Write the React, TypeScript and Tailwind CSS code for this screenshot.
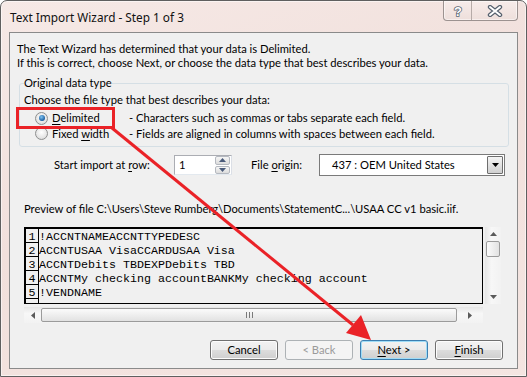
import React from "react";

const ui = "font-['Lato',sans-serif] text-[11.2px] leading-[14px] text-black";
const mono = "font-['Liberation_Mono',monospace] text-[11.67px] leading-[16px] text-black";

const previewRows = [
	"!ACCNTNAMEACCNTTYPEDESC",
	"ACCNTUSAA VisaCCARDUSAA Visa",
	"ACCNTDebits TBDEXPDebits TBD",
	"ACCNTMy checking accountBANKMy checking account",
	"!VENDNAME",
];

const U: React.FC<{ children: React.ReactNode }> = ({ children }) => (
	<span className="underline underline-offset-[2px] decoration-1">{children}</span>
);

const Tri: React.FC<{ dir: "up" | "down" | "left" | "right"; color?: string }> = ({ dir, color = "#4d4d4d" }) => {
	const points = {
		up: "0,4 3.5,0 7,4",
		down: "0,0 7,0 3.5,4",
		left: "4,0 4,7 0,3.5",
		right: "0,0 4,3.5 0,7",
	}[dir];
	const vertical = dir === "up" || dir === "down";
	return (
		<svg width={vertical ? 7 : 4} height={vertical ? 4 : 7} viewBox={vertical ? "0 0 7 4" : "0 0 4 7"}>
			<polygon points={points} fill={color} />
		</svg>
	);
};

const Radio: React.FC<{ checked?: boolean }> = ({ checked }) => (
	<span className="flex h-[13px] w-[13px] shrink-0 items-center justify-center rounded-full border border-[#8e8f8f] bg-[radial-gradient(circle_at_50%_40%,#ffffff_0%,#e6e6e6_60%,#cfcfcf_100%)]">
		{checked && (
			<span className="h-[6px] w-[6px] rounded-full bg-[radial-gradient(circle_at_40%_35%,#7ec3f2_0%,#1b5ea0_70%,#0e3f75_100%)]" />
		)}
	</span>
);

const WizardButton: React.FC<{ children: React.ReactNode; variant?: "normal" | "default" | "disabled" }> = ({
	children,
	variant = "normal",
}) => {
	if (variant === "disabled") {
		return (
			<div className="flex h-[20px] w-[68px] items-center justify-center rounded-[3px] border border-[#adb2b5] bg-[#f4f4f4] text-[#9a9a9a]">
				{children}
			</div>
		);
	}
	if (variant === "default") {
		return (
			<div className="flex h-[20px] w-[68px] items-center justify-center rounded-[3px] border border-[#3c7fb1] bg-[linear-gradient(#f2f2f2_0%,#ebebeb_49%,#dddddd_50%,#cfcfcf_100%)] shadow-[inset_0_0_0_1px_#9fdcf7]">
				{children}
			</div>
		);
	}
	return (
		<div className="flex h-[20px] w-[68px] items-center justify-center rounded-[3px] border border-[#707070] bg-[linear-gradient(#f2f2f2_0%,#ebebeb_49%,#dddddd_50%,#cfcfcf_100%)] shadow-[inset_0_0_0_1px_#fcfcfc]">
			{children}
		</div>
	);
};

export default function App() {
	return (
		<div
			className={`relative flex h-[377px] w-[527px] flex-col overflow-hidden rounded-t-[7px] border border-[#5f5f5f] bg-[linear-gradient(160deg,#f6e9e6_0%,#f1e0dc_45%,#f4e5e1_100%)] shadow-[inset_0_0_0_1px_rgba(255,255,255,0.55)] ${ui}`}
		>
			{/* title bar */}
			<div className="flex h-[31px] shrink-0 items-center justify-between">
				<div className="pl-[9px] font-['Noto_Sans',sans-serif] text-[11.8px] text-[#111]">Text Import Wizard - Step 1 of 3</div>
				<div className="mr-[8px] flex h-[20px] self-start rounded-b-[4px] border-x border-b border-[#9c9290] bg-[linear-gradient(#f7ecea,#eedfdb)] shadow-[inset_0_0_0_1px_rgba(255,255,255,0.5)]">
					<div className="flex w-[28px] items-center justify-center border-r border-[#b6aba8]">
						<svg width="12" height="14" viewBox="0 0 12 14">
							<text
								x="6"
								y="12"
								textAnchor="middle"
								fontSize="13"
								fontWeight="bold"
								fontFamily="Liberation Sans, sans-serif"
								fill="#ffffff"
								stroke="#5b6673"
								strokeWidth="1.6"
								paintOrder="stroke"
							>
								?
							</text>
						</svg>
					</div>
					<div className="flex w-[45px] items-center justify-center">
						<svg width="16" height="12" viewBox="0 0 16 12">
							<path d="M3 2 L13 10 M13 2 L3 10" stroke="#56616e" strokeWidth="4.4" strokeLinecap="round" />
							<path d="M3 2 L13 10 M13 2 L3 10" stroke="#ffffff" strokeWidth="2" strokeLinecap="round" />
						</svg>
					</div>
				</div>
			</div>

			{/* client area */}
			<div className="mx-[8px] flex h-[337px] shrink-0 flex-col border border-[#8a8a8a] bg-[#f0f0f0]">
				<div className="pl-[7px] pt-[9px]">
					<div>The Text Wizard has determined that your data is Delimited.</div>
					<div>If this is correct, choose Next, or choose the data type that best describes your data.</div>
				</div>

				<fieldset className="ml-[9px] mr-[8px] mt-[6px] rounded-[3px] border border-[#d5dfe5] px-[4px] pb-[5px]">
					<legend className="leading-[14px]">Original data type</legend>
					<div className="mt-[3px]">Choose the file type that best describes your data:</div>
					<div className="mt-[3px] flex h-[16px] items-center">
						<div className="flex w-[105px] items-center pl-[11px]">
							<Radio checked />
							<span className="ml-[4px]">
								<U>D</U>elimited
							</span>
						</div>
						<span>- Characters such as commas or tabs separate each field.</span>
					</div>
					<div className="flex h-[15px] items-center">
						<div className="flex w-[105px] items-center pl-[11px]">
							<Radio />
							<span className="ml-[4px]">
								Fixed <U>w</U>idth
							</span>
						</div>
						<span>- Fields are aligned in columns with spaces between each field.</span>
					</div>
				</fieldset>

				<div className="mt-[7px] flex h-[22px] items-center">
					<div className="ml-[44px] w-[120px]">
						Start import at <U>r</U>ow:
					</div>
					<div className="flex h-[20px] w-[58px] items-center border border-[#abadb3] border-b-[#e3e9ef] border-r-[#dbdfe6] bg-white pl-[4px]">
						<span className="flex-1">1</span>
						<div className="mr-[1px] flex h-[18px] w-[15px] flex-col gap-[1px]">
							<div className="flex flex-1 items-center justify-center rounded-[2px] border border-[#b5b9c0] bg-[linear-gradient(#f6f6f6,#dcdcdc)]">
								<Tri dir="up" color="#4a5b7a" />
							</div>
							<div className="flex flex-1 items-center justify-center rounded-[2px] border border-[#b5b9c0] bg-[linear-gradient(#f6f6f6,#dcdcdc)]">
								<Tri dir="down" color="#4a5b7a" />
							</div>
						</div>
					</div>
					<div className="ml-[19px] w-[68px]">
						File <U>o</U>rigin:
					</div>
					<div className="flex h-[22px] w-[186px] items-center border border-[#7a7a7a] bg-white">
						<span className="flex-1 pl-[12px]">437 : OEM United States</span>
						<div className="mr-[1px] flex h-[18px] w-[16px] items-center justify-center rounded-[1px] border border-[#6e6e6e] bg-[linear-gradient(#f4f4f4,#d0d0d0)]">
							<Tri dir="down" color="#000000" />
						</div>
					</div>
				</div>

				<div className="ml-[14px] mt-[26px]">
					Preview of file C:\Users\Steve Rumberg\Documents\StatementC...\USAA CC v1 basic.iif.
				</div>

				<div className="ml-[14px] mt-[11px] flex h-[77px] gap-[2px]">
					<div className="flex w-[459px] flex-col overflow-hidden border-b border-l-2 border-r border-t-2 border-black bg-[#f0f0f0]">
						{previewRows.map((row, index) => (
							<div key={index} className="flex h-[14px] shrink-0">
								<div className={`w-[13px] shrink-0 overflow-hidden border-b border-r border-black text-center ${mono}`}>
									{index + 1}
								</div>
								<div className={`overflow-hidden whitespace-pre ${mono}`}>{row}</div>
							</div>
						))}
						<div className="flex flex-1">
							<div className="w-[13px] border-r border-black" />
						</div>
					</div>
					<div className="flex w-[16px] flex-col bg-[linear-gradient(90deg,#e6e6e6,#f7f7f7_40%,#f2f2f2)]">
						<div className="flex h-[14px] items-center justify-center">
							<Tri dir="up" color="#5a5a5a" />
						</div>
						<div className="mx-[1px] h-[16px] rounded-[2px] border border-[#9b9b9b] bg-[linear-gradient(90deg,#fbfbfb,#e2e2e2)]" />
						<div className="flex-1" />
						<div className="flex h-[14px] items-center justify-center">
							<Tri dir="down" color="#5a5a5a" />
						</div>
					</div>
				</div>

				<div className="ml-[14px] mt-[3px] flex h-[16px] w-[459px] items-center bg-[linear-gradient(#e6e6e6,#f7f7f7_40%,#f2f2f2)]">
					<div className="flex w-[17px] items-center justify-center">
						<Tri dir="left" color="#5a5a5a" />
					</div>
					<div className="flex h-[14px] w-[416px] items-center justify-center rounded-[2px] border border-[#9b9b9b] bg-[linear-gradient(#fbfbfb,#e2e2e2)]">
						<svg width="7" height="6" viewBox="0 0 7 6">
							<path d="M0.5 0 V6 M3.5 0 V6 M6.5 0 V6" stroke="#7a7a7a" strokeWidth="1" />
						</svg>
					</div>
					<div className="flex flex-1 items-center justify-center">
						<Tri dir="right" color="#5a5a5a" />
					</div>
				</div>

				<div className="mr-[14px] mt-[17px] flex justify-end gap-[7px]">
					<WizardButton>Cancel</WizardButton>
					<WizardButton variant="disabled">&lt; Back</WizardButton>
					<WizardButton variant="default">
						<span>
							<U>N</U>ext &gt;
						</span>
					</WizardButton>
					<WizardButton>
						<span>
							<U>F</U>inish
						</span>
					</WizardButton>
				</div>
			</div>

			{/* red annotation overlay */}
			<svg className="pointer-events-none absolute left-[-1px] top-[-1px]" width="527" height="377" viewBox="0 0 527 377">
				<rect x="17.5" y="108.5" width="96" height="19" fill="none" stroke="#ea2227" strokeWidth="3" />
				<line x1="112" y1="128" x2="353" y2="325" stroke="#ea2227" strokeWidth="3" />
				<polygon points="371,340 346,333 361,315" fill="#ea2227" />
			</svg>
		</div>
	);
}
